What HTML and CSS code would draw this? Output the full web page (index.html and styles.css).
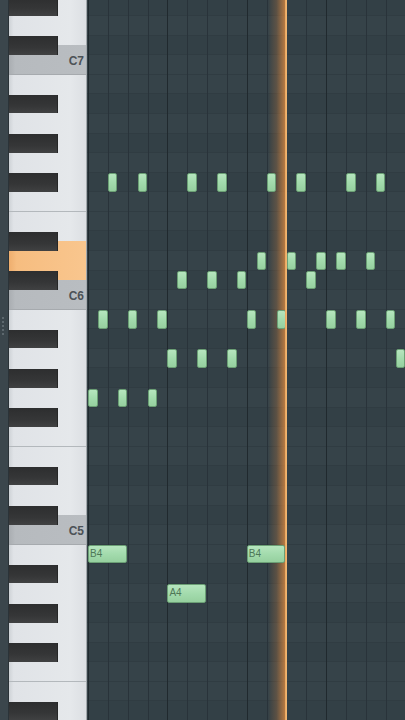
FILE: index.html
```html
<!DOCTYPE html>
<html>
<head>
<meta charset="utf-8">
<link rel="stylesheet" href="styles.css">
</head>
<body>
<div class="app">
  <div class="strip"><div class="grip"><i></i><i></i><i></i><i></i><i></i></div></div>
  <div class="keys">
    <div class="whites">
      <div class="wk s"></div>
      <div class="wk d"></div>
      <div class="wk s ck edge"><span class="lbl">C7</span></div>
      <div class="wk s"></div>
      <div class="wk d"></div>
      <div class="wk d"></div>
      <div class="wk s edge"></div>
      <div class="wk s"></div>
      <div class="wk d on"></div>
      <div class="wk s ck edge"><span class="lbl">C6</span></div>
      <div class="wk s"></div>
      <div class="wk d"></div>
      <div class="wk d"></div>
      <div class="wk s edge"></div>
      <div class="wk s"></div>
      <div class="wk d"></div>
      <div class="wk s ck edge"><span class="lbl">C5</span></div>
      <div class="wk s"></div>
      <div class="wk d"></div>
      <div class="wk d"></div>
      <div class="wk s edge"></div>
      <div class="wk s"></div>
      <div class="wk d"></div>
    </div>
    <div class="blacks">
      <div class="kr"><div class="bk"></div></div>
      <div class="kr"></div>
      <div class="kr"><div class="bk"></div></div>
      <div class="kr"></div>
      <div class="kr"></div>
      <div class="kr"><div class="bk"></div></div>
      <div class="kr"></div>
      <div class="kr"><div class="bk"></div></div>
      <div class="kr"></div>
      <div class="kr"><div class="bk"></div></div>
      <div class="kr"></div>
      <div class="kr"></div>
      <div class="kr"><div class="bk"></div></div>
      <div class="kr"></div>
      <div class="kr"><div class="bk"></div></div>
      <div class="kr"></div>
      <div class="kr"></div>
      <div class="kr"><div class="bk"></div></div>
      <div class="kr"></div>
      <div class="kr"><div class="bk"></div></div>
      <div class="kr"></div>
      <div class="kr"><div class="bk"></div></div>
      <div class="kr"></div>
      <div class="kr"></div>
      <div class="kr"><div class="bk"></div></div>
      <div class="kr"></div>
      <div class="kr"><div class="bk"></div></div>
      <div class="kr"></div>
      <div class="kr"></div>
      <div class="kr"><div class="bk"></div></div>
      <div class="kr"></div>
      <div class="kr"><div class="bk"></div></div>
      <div class="kr"></div>
      <div class="kr"><div class="bk"></div></div>
      <div class="kr"></div>
      <div class="kr"></div>
      <div class="kr"><div class="bk"></div></div>
    </div>
  </div>
  <div class="grid">
    <div class="rows">
      <div class="r b"></div>
      <div class="r"></div>
      <div class="r b"></div>
      <div class="r"></div>
      <div class="r"></div>
      <div class="r b"></div>
      <div class="r"></div>
      <div class="r b"></div>
      <div class="r"></div>
      <div class="r b">
        <div class="n" style="--b:1"></div>
        <div class="n" style="--b:2.5"></div>
        <div class="n" style="--b:5"></div>
        <div class="n" style="--b:6.5"></div>
        <div class="n" style="--b:9"></div>
        <div class="n" style="--b:10.5"></div>
        <div class="n" style="--b:13"></div>
        <div class="n" style="--b:14.5"></div>
      </div>
      <div class="r"></div>
      <div class="r"></div>
      <div class="r b"></div>
      <div class="r">
        <div class="n" style="--b:8.5"></div>
        <div class="n" style="--b:10"></div>
        <div class="n" style="--b:11.5"></div>
        <div class="n" style="--b:12.5"></div>
        <div class="n" style="--b:14"></div>
      </div>
      <div class="r b">
        <div class="n" style="--b:4.5"></div>
        <div class="n" style="--b:6"></div>
        <div class="n" style="--b:7.5"></div>
        <div class="n" style="--b:11"></div>
      </div>
      <div class="r"></div>
      <div class="r">
        <div class="n" style="--b:0.5"></div>
        <div class="n" style="--b:2"></div>
        <div class="n" style="--b:3.5"></div>
        <div class="n" style="--b:8"></div>
        <div class="n" style="--b:9.5"></div>
        <div class="n" style="--b:12"></div>
        <div class="n" style="--b:13.5"></div>
        <div class="n" style="--b:15"></div>
      </div>
      <div class="r b"></div>
      <div class="r">
        <div class="n" style="--b:4"></div>
        <div class="n" style="--b:5.5"></div>
        <div class="n" style="--b:7"></div>
        <div class="n" style="--b:15.5"></div>
      </div>
      <div class="r b"></div>
      <div class="r">
        <div class="n" style="--b:0"></div>
        <div class="n" style="--b:1.5"></div>
        <div class="n" style="--b:3"></div>
      </div>
      <div class="r b"></div>
      <div class="r"></div>
      <div class="r"></div>
      <div class="r b"></div>
      <div class="r"></div>
      <div class="r b"></div>
      <div class="r"></div>
      <div class="r">
        <div class="n l" style="--b:0">B4</div>
        <div class="n l" style="--b:8">B4</div>
      </div>
      <div class="r b"></div>
      <div class="r">
        <div class="n l" style="--b:4">A4</div>
      </div>
      <div class="r b"></div>
      <div class="r"></div>
      <div class="r b"></div>
      <div class="r"></div>
      <div class="r"></div>
      <div class="r b"></div>
    </div>
    <div class="cols">
      <div class="col bar"></div><div class="col"></div><div class="col"></div><div class="col"></div>
      <div class="col bar"></div><div class="col"></div><div class="col"></div><div class="col"></div>
      <div class="col bar"></div><div class="col"></div><div class="col"></div><div class="col"></div>
      <div class="col bar"></div><div class="col"></div><div class="col"></div><div class="col"></div>
      <div class="col bar"></div>
    </div>
    <div class="glow"></div>
    <div class="playline"></div>
  </div>
</div>
</body>
</html>
```

FILE: styles.css
```css
:root {
  --h: 19.583px;
  --beat: 19.85px;
}
* { box-sizing: border-box; }
html, body {
  margin: 0;
  padding: 0;
  width: 405px;
  height: 720px;
  overflow: hidden;
  background: #364349;
  font-family: "Liberation Sans", Arial, sans-serif;
}
.app {
  display: flex;
  width: 405px;
  height: 720px;
  overflow: hidden;
}
.strip {
  flex: none;
  width: 9px;
  height: 720px;
  background: #3b464c;
  border-right: 1px solid #2b3338;
  display: flex;
  flex-direction: column;
  align-items: flex-start;
  padding-top: 317px;
  padding-left: 2px;
}
.grip {
  display: flex;
  flex-direction: column;
  gap: 2px;
}
.grip i {
  display: block;
  width: 2px;
  height: 2px;
  background: #5d686e;
}
.keys {
  flex: none;
  position: relative;
  width: 78px;
  height: 720px;
  overflow: hidden;
  border-right: 1px solid #a3a8ac;
  background: #e3e6ea;
}
.whites {
  display: flex;
  flex-direction: column;
  margin-top: calc(-3.5px - var(--h));
}
.wk {
  flex: none;
  display: flex;
  align-items: flex-start;
  justify-content: flex-end;
  background: linear-gradient(to right, #ced2d6 0, #e0e3e7 6%, #e5e8eb 80%, #dcdfe3 100%);
}
.wk.s { height: calc(var(--h) * 1.5); }
.wk.d { height: calc(var(--h) * 2); }
.wk.edge {
  border-bottom: 1px solid #b3b8bc;
}
.wk.ck {
  background: linear-gradient(to right, #a9adb1 0, #b6babe 8%, #b9bdc1 100%);
  border-bottom-color: #a6aaae;
}
.wk.on {
  background: linear-gradient(to right, #eeae6e 0, #f6bd80 10%, #f9c68e 100%);
}
.lbl {
  font-size: 12px;
  line-height: 12px;
  font-weight: bold;
  color: #4c5257;
  padding-top: 9.5px;
  padding-right: 2px;
}
.blacks {
  position: absolute;
  left: 0;
  top: -3.5px;
  width: 100%;
  display: flex;
  flex-direction: column;
}
.kr {
  flex: none;
  height: var(--h);
}
.bk {
  width: 49px;
  height: calc(var(--h) - 1px);
  margin-top: 0.5px;
  background: linear-gradient(to bottom, #2d2e2f 0, #353637 60%, #404142 100%);
  border-right: 1px solid #262727;
}
.grid {
  flex: 1;
  position: relative;
  height: 720px;
  overflow: hidden;
  background: #364349;
}
.rows {
  display: flex;
  flex-direction: column;
  margin-top: -3.5px;
}
.r {
  flex: none;
  position: relative;
  height: var(--h);
  background: #364349;
  box-shadow: inset 0 -1px 0 #303c42;
}
.r.b {
  background: #334046;
}
.cols {
  position: absolute;
  left: 1px;
  top: 0;
  bottom: 0;
  display: flex;
  z-index: 1;
  pointer-events: none;
}
.col {
  flex: none;
  width: var(--beat);
  height: 100%;
  border-left: 1px solid #29333a;
}
.col.bar {
  border-left-color: #20292e;
}
.n {
  position: absolute;
  z-index: 2;
  left: calc(1px + var(--b) * var(--beat));
  top: 0.5px;
  width: 9.6px;
  height: 18.3px;
  border: 1px solid #6b9f75;
  border-radius: 2px;
  background: linear-gradient(to bottom, #b6e5be 0, #a3dbad 50%, #96d09f 100%);
  font-size: 10px;
  line-height: 16.3px;
  color: #4e7757;
  padding-left: 1px;
  white-space: nowrap;
  overflow: hidden;
}
.n.l {
  width: 38.7px;
}
.glow {
  position: absolute;
  z-index: 1;
  left: 181px;
  top: 0;
  width: 17px;
  height: 100%;
  background: linear-gradient(to right, rgba(214, 130, 60, 0) 0, rgba(214, 130, 60, 0.25) 50%, rgba(226, 140, 64, 0.75) 100%);
}
.playline {
  position: absolute;
  z-index: 3;
  left: 197.5px;
  top: 0;
  width: 2px;
  height: 100%;
  background: linear-gradient(to right, #e9a45c, #f4bc78);
}
```
